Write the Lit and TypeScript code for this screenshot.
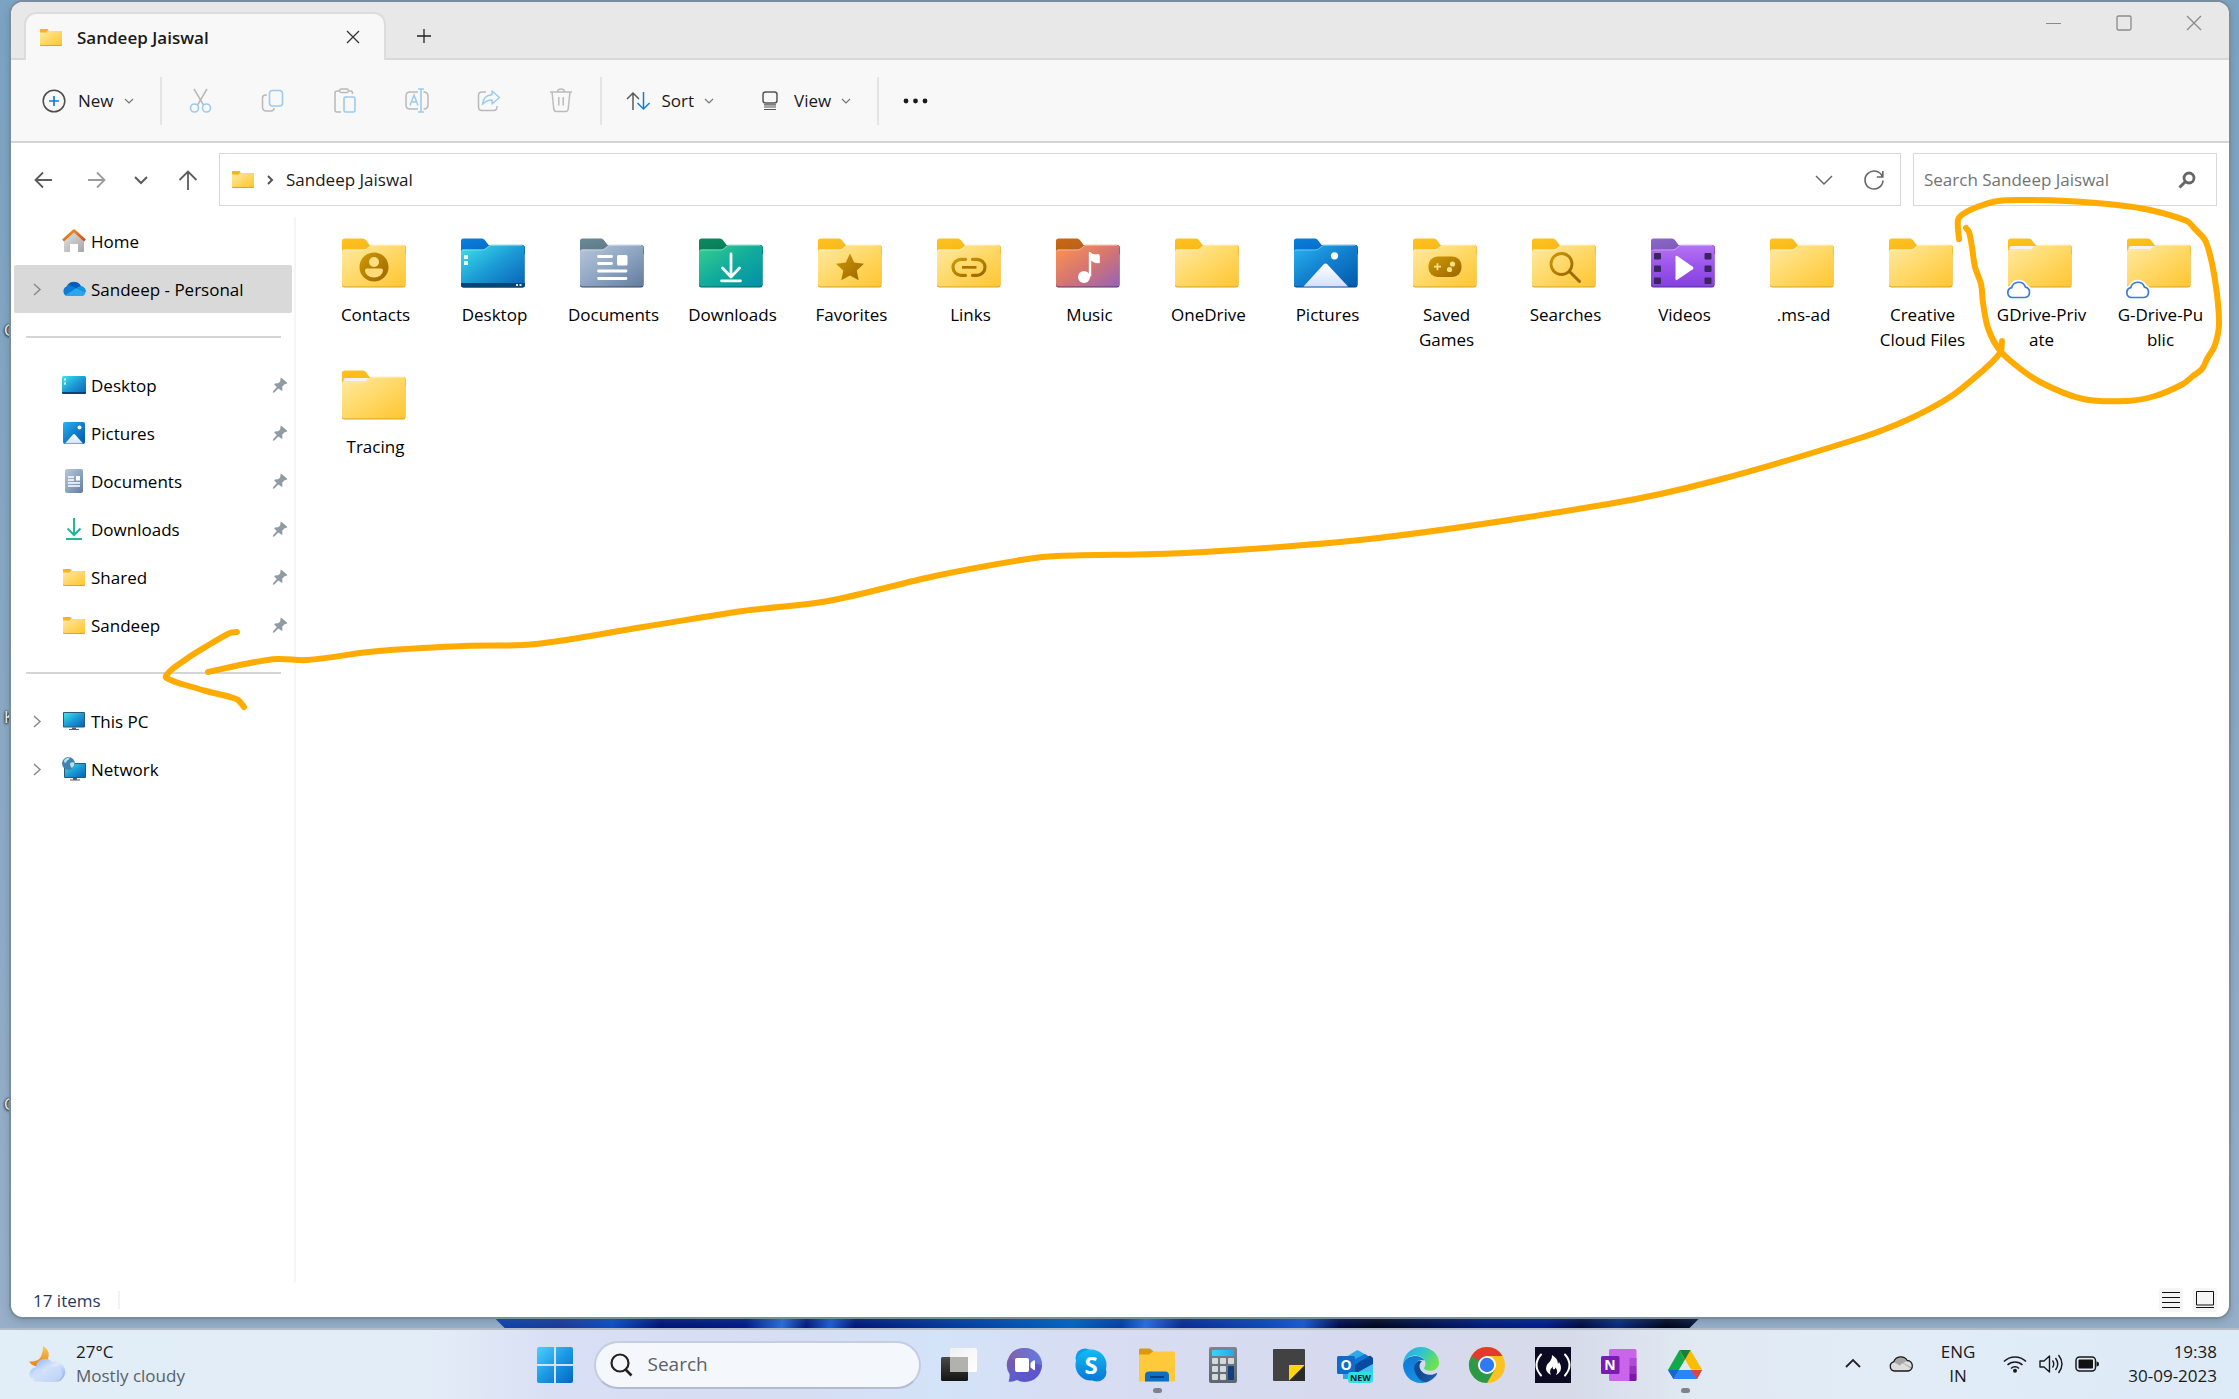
import { LitElement, html, svg, css } from "lit";
import { customElement } from "lit/decorators.js";
import { classMap } from "lit/directives/class-map.js";

type Point = [number, number];

interface FolderLook {
  tab: string;
  body: string;
  base: string;
}

interface FileEntry {
  lines: string[];
  look: FolderLook;
  emblem?: unknown;
  paper?: boolean;
  cloud?: boolean;
}

interface Place {
  label: string;
  icon: unknown;
  expandable?: boolean;
  pinned?: boolean;
  selected?: boolean;
}

/* ---------- gradients shared by every icon ---------- */

const gradient = (id: string, stops: string[], x2 = 1, y2 = 1) => svg`
  <linearGradient id=${id} x1="0" y1="0" x2=${x2} y2=${y2}>
    ${stops.map((c, i) => svg`<stop offset=${i / (stops.length - 1)} stop-color=${c} />`)}
  </linearGradient>`;

const gradients = html`
  <svg class="defs" width="0" height="0" aria-hidden="true">
    <defs>
      ${gradient("yellow", ["#ffe9a4", "#ffd866", "#ffc531"])}
      ${gradient("yellowTab", ["#ffc21d", "#f3b01c"])}
      ${gradient("gold", ["#cf9a08", "#9c6500"])}
      ${gradient("desk", ["#3fe3e8", "#1c9bd6", "#0862b8"])}
      ${gradient("blueTab", ["#0a7fdc", "#0561bd"])}
      ${gradient("docs", ["#b9c7d9", "#8ea6c4", "#647c9c"])}
      ${gradient("docsTab", ["#6a8a96", "#566e7c"])}
      ${gradient("down", ["#37d18e", "#12ab9c", "#0090a8"])}
      ${gradient("downTab", ["#0b8a5e", "#067355"])}
      ${gradient("music", ["#ff9350", "#d6766f", "#9562b8"])}
      ${gradient("musicTab", ["#cc6810", "#a85a25"])}
      ${gradient("pics", ["#28b5f2", "#127fcc", "#0358ac"])}
      ${gradient("video", ["#b673f3", "#9c55ec", "#8441dd"], 0, 1)}
      ${gradient("videoTab", ["#8b68c9", "#7450ab"])}
      ${gradient("snow", ["#ffffff", "#d4e0ff"], 0, 1)}
      ${gradient("wall", ["#e4e4e4", "#a6a6a6"])}
      ${gradient("roof", ["#f59a1b", "#d5460c"])}
      ${gradient("arrowDown", ["#34cf8d", "#0f9fa4"])}
      ${gradient("win", ["#4dd0ff", "#1b98e4", "#0068c8"])}
      ${gradient("moon", ["#f7c95c", "#f0820e"], 0, 1)}
      ${gradient("cloudy", ["#7fa9ee", "#dfeafc", "#7ea5ea"])}
      ${gradient("chat", ["#8a5a9c", "#5f5cc8", "#5a4fd0"])}
      ${gradient("chatSky", ["#7d66b5", "#6a86e8"], 1, 0)}
      ${gradient("skype", ["#10bdf5", "#0a78d4"], 0, 1)}
      ${gradient("calc", ["#7c858c", "#5c666e"], 0, 1)}
      ${gradient("calcTop", ["#35d7ff", "#24a9e6"], 1, 0)}
      ${gradient("edgeTop", ["#2aa9ec", "#2fc4cf", "#6be24e"], 1, 0.5)}
      ${gradient("edgeLow", ["#1377cc", "#1283dc", "#1490e6"], 0.3, 1)}
      ${gradient("edgeDark", ["#0c4f9e", "#114b94", "#1a5fae"], 1, 0.6)}
      ${gradient("outlook", ["#30b4f0", "#0a5fc0"])}
      ${gradient("dark", ["#4a4a48", "#141414"], 0, 1)}
      ${gradient("light", ["#f0f0f0", "#ffffff"])}
    </defs>
  </svg>`;

/* ---------- folders ---------- */

const looks: Record<string, FolderLook> = {
  yellow: { tab: "url(#yellowTab)", body: "url(#yellow)", base: "#dba128" },
  desktop: { tab: "url(#blueTab)", body: "url(#desk)", base: "#0b3f73" },
  documents: { tab: "url(#docsTab)", body: "url(#docs)", base: "#37475c" },
  downloads: { tab: "url(#downTab)", body: "url(#down)", base: "#04625f" },
  music: { tab: "url(#musicTab)", body: "url(#music)", base: "#5c3566" },
  pictures: { tab: "url(#blueTab)", body: "url(#pics)", base: "#03408a" },
  videos: { tab: "url(#videoTab)", body: "url(#video)", base: "#5b2ba6" },
};

const bodyPath =
  "M0 14q0-2.500 2.500-2.500h18c2 0 3.500-.4 4.800-1.600l2-1.800c.9-.8 2-1.100 3.200-1.100h30.500q2.500 0 2.500 2.500v37.500q0 2.500-2.500 2.500h-58.500q-2.500 0-2.500-2.500z";

const cloudBadge = svg`
  <path d="M4 59.500a5 5 0 0 1-.3-9.800a7.200 7.200 0 0 1 13.800-.6a5.300 5.300 0 0 1-.6 10.400z"
    fill="#fff" stroke="#fff" stroke-width="5" />
  <path d="M4 59.500a5 5 0 0 1-.3-9.800a7.200 7.200 0 0 1 13.800-.6a5.300 5.300 0 0 1-.6 10.400z"
    fill="#fff" stroke="#3a7be0" stroke-width="1.700" />`;

const folder = (f: FileEntry) => html`
  <svg class="folder" viewBox="0 0 64 50" aria-hidden="true">
    <path d="M0 3q0-2.500 2.500-2.500h17.500c2 0 3 .6 4.200 2l3.600 4.800h33.200q3 0 3 3v6h-64z" fill=${f.look.tab} />
    ${f.paper ? svg`<path d="M1.500 10q0-2 2-2h24l-4 4h-22z" fill="#f3f3f3" />` : ""}
    <path d=${bodyPath} fill=${f.look.base} />
    <path d=${bodyPath} fill=${f.look.body} transform="scale(1 .982)" />
    <path d="M.5 13.500q.3-1.500 2-1.500h18c2 0 3.500-.4 4.800-1.600l2-1.800c.9-.8 2-1.100 3.200-1.100h30.500"
      fill="none" stroke="#fff" stroke-opacity=".35" />
    ${f.emblem ?? ""}
    ${f.cloud ? cloudBadge : ""}
  </svg>`;

const emblems = {
  contact: svg`
    <circle cx="32" cy="29" r="14.500" fill="url(#gold)" />
    <circle cx="32" cy="24" r="5" fill="#ffdf80" />
    <path d="M23 32.500q0-2 2-2h14q2 0 2 2a9 7 0 0 1-18 0z" fill="#ffdc75" />`,
  desktop: svg`
    <path d="M3 17h4v4h-4zM3 23h4v4h-4z" fill="#e9fbff" />
    <path d="M0 45h64v2q0 2.500-2.500 2.500h-59q-2.500 0-2.500-2.500z" fill="#0a4274" />
    <path d="M55 46h2v2h-2zM58.500 46h2v2h-2z" fill="#d8e6f2" />`,
  document: svg`
    <path d="M18.500 18.500h13M18.500 25.500h13M18.500 33h27.500M18.500 40.500h27.500" stroke="#fff" stroke-width="2.800" stroke-linecap="round" />
    <rect x="37" y="17" width="10.500" height="10.500" rx="1.500" fill="#fff" />`,
  download: svg`
    <path d="M32 16v23M23.500 30l8.500 9l8.500-9M22.500 42.800h19" fill="none" stroke="#f4fffb" stroke-width="2.800" stroke-linecap="round" stroke-linejoin="round" />`,
  star: svg`
    <path d="M32 15.500l4.200 9l9.800 1.200l-7.200 6.800l1.900 9.700l-8.700-4.800l-8.700 4.800l1.900-9.700l-7.200-6.800l9.800-1.200z" fill="url(#gold)" />`,
  link: svg`
    <path d="M28.500 21.300h-4.500a8 8 0 0 0 0 16h4.500M35.500 21.300h4.500a8 8 0 0 1 0 16h-4.500" fill="none" stroke="url(#gold)" stroke-width="3.200" stroke-linecap="round" />
    <path d="M25 28h14.500v2.700h-14.500z" fill="#a87300" />`,
  note: svg`
    <path d="M34 14.500v24" stroke="#fff" stroke-width="2.400" />
    <path d="M32.800 13.500q4 3.500 9 2.500q2 0 2 2v7q-6 .8-9.800-3.500z" fill="#fff" />
    <ellipse cx="28" cy="39" rx="6" ry="6" fill="#fff" />`,
  picture: svg`
    <path d="M9.500 48.500l20-22q2-1.800 4 0l20.500 22z" fill="url(#snow)" />
    <circle cx="40.500" cy="17.800" r="3.600" fill="#fff" />`,
  game: svg`
    <rect x="15.500" y="18.500" width="33" height="20.500" rx="9" fill="url(#gold)" />
    <path d="M21 28.700h7M24.500 25.200v7" stroke="#ffdf80" stroke-width="1.800" />
    <circle cx="39.500" cy="26" r="2.600" fill="#ffdf80" />
    <circle cx="36.500" cy="31.500" r="2.600" fill="#ffdf80" />`,
  search: svg`
    <circle cx="29.500" cy="26" r="10.500" fill="none" stroke="url(#gold)" stroke-width="2.800" />
    <path d="M37.500 33.500l10 10" stroke="#9c6a00" stroke-width="3" stroke-linecap="round" />`,
  film: svg`
    <g fill="#3b2560">
      ${[15, 27.500, 39.500].map((y) => svg`
        <rect x="3" y=${y} width="7" height="6.500" rx="1" />
        <rect x="53.500" y=${y} width="7" height="6.500" rx="1" />`)}
    </g>
    <path d="M24.500 19q0-2 1.800-1l15.500 10.800q1.500 1.200 0 2.400l-15.500 10.600q-1.800 1-1.800-1z" fill="#fff" />`,
};

const files: FileEntry[] = [
  { lines: ["Contacts"], look: looks.yellow, emblem: emblems.contact },
  { lines: ["Desktop"], look: looks.desktop, emblem: emblems.desktop },
  { lines: ["Documents"], look: looks.documents, emblem: emblems.document },
  { lines: ["Downloads"], look: looks.downloads, emblem: emblems.download },
  { lines: ["Favorites"], look: looks.yellow, emblem: emblems.star },
  { lines: ["Links"], look: looks.yellow, emblem: emblems.link },
  { lines: ["Music"], look: looks.music, emblem: emblems.note },
  { lines: ["OneDrive"], look: looks.yellow },
  { lines: ["Pictures"], look: looks.pictures, emblem: emblems.picture },
  { lines: ["Saved", "Games"], look: looks.yellow, emblem: emblems.game },
  { lines: ["Searches"], look: looks.yellow, emblem: emblems.search },
  { lines: ["Videos"], look: looks.videos, emblem: emblems.film },
  { lines: [".ms-ad"], look: looks.yellow },
  { lines: ["Creative", "Cloud Files"], look: looks.yellow },
  { lines: ["GDrive-Priv", "ate"], look: looks.yellow, paper: true, cloud: true },
  { lines: ["G-Drive-Pu", "blic"], look: looks.yellow, paper: true, cloud: true },
  { lines: ["Tracing"], look: looks.yellow, paper: true },
];

/* ---------- small icons ---------- */

const icon = (w: number, h: number, content: unknown) => html`
  <svg width=${w} height=${h} viewBox="0 0 ${w} ${h}" fill="none" aria-hidden="true">${content}</svg>`;

const chevron = (dir: "down" | "right" | "up", w: number, h: number, color: string, stroke: number) => {
  const d =
    dir === "down" ? `M1 1l${w / 2 - 1} ${h - 2}l${w / 2 - 1} -${h - 2}`
    : dir === "up" ? `M1 ${h - 1}l${w / 2 - 1} -${h - 2}l${w / 2 - 1} ${h - 2}`
    : `M1 1l${w - 2} ${h / 2 - 1}l-${w - 2} ${h / 2 - 1}`;
  return icon(w, h, svg`<path d=${d} stroke=${color} stroke-width=${stroke} />`);
};

const smallFolder = (w: number, h: number) =>
  icon(w, h, svg`
    <path d="M0 1q0-1 1-1h6l2 2v3h-9z" fill="#f8b515" />
    <rect x="0" y="2" width=${w} height=${h - 2} rx="1" fill="#e0a42a" />
    <rect x="0" y="2" width=${w} height=${h - 3} rx="1" fill="url(#yellow)" />
    <path d="M0 1q0-1 1-1h6q1 0 1 1l-1 2q0 .5-1 .5h-6z" fill="#f8b515" />`);

const placeIcons = {
  home: icon(24, 24, svg`
    <path d="M2 11l10-9l10 9v11q0 1-1 1h-5v-8h-8v8h-5q-1 0-1-1z" fill="url(#wall)" />
    <path d="M1 11.500l11-10l11 10" stroke="url(#roof)" stroke-width="2.600" stroke-linejoin="round" />`),
  oneDrive: icon(24, 16, svg`
    <path d="M5 15a5 5 0 0 1-.5-9.400a8 8 0 0 1 14.500-.3a5 5 0 0 1 .5 9.700z" fill="#0f7bd4" />
    <path d="M6.500 3.500a8 8 0 0 1 12.500 1.800l-3.500 2.700z" fill="#0a5cb8" />
    <path d="M19 5.300a5 5 0 0 1 4.800 6l-9-4.500q2-1.800 4.200-1.500z" fill="#1494e4" />
    <path d="M3 14.500l11.500-7.500l9 4.500a4.300 4.300 0 0 1-4 3.500h-14.500z" fill="#28a8ea" />`),
  desktop: icon(24, 18, svg`
    <rect width="24" height="18" rx="1.500" fill="url(#desk)" />
    <path d="M0 16h24v.5q0 1.500-1.500 1.500h-21q-1.500 0-1.500-1.500z" fill="#0a4376" />
    <path d="M2 2.500h2v2h-2zM2 6.500h2v2h-2z" fill="#fff" />`),
  pictures: icon(22, 22, svg`
    <rect width="22" height="22" rx="2" fill="url(#pics)" />
    <path d="M2 21.500l8-9q1-1 2 0l8 9z" fill="url(#snow)" />
    <circle cx="16.500" cy="5.500" r="2" fill="#fff" />`),
  documents: icon(18, 24, svg`
    <rect width="18" height="24" rx="2" fill="url(#docs)" />
    <path d="M3 8h6M3 11h6M3 14h12M3 17h12" stroke="#fff" stroke-width="1.400" />
    <rect x="11" y="7" width="4" height="4.500" fill="#fff" />`),
  downloads: icon(18, 24, svg`
    <path d="M9 1v17M2.500 11.500l6.500 6.500l6.500-6.500M1 22h16" stroke="url(#arrowDown)" stroke-width="2" />
    <path d="M9 1v17" stroke="#20b896" stroke-width="2" /><path d="M1 22h16" stroke="#20b896" stroke-width="2" />`),
  folder: smallFolder(22, 17),
  pc: icon(22, 18, svg`
    <rect width="22" height="15.500" rx="1" fill="#2b5873" />
    <rect x="1" y="1" width="20" height="13.500" fill="url(#desk)" />
    <path d="M9 15.500h4v1.500h3v1h-10v-1h3z" fill="#54626c" />`),
  network: icon(24, 24, svg`
    <rect x="2" y="6" width="22" height="15" rx="1" fill="#2b5873" />
    <rect x="3" y="7" width="20" height="13" fill="url(#desk)" />
    <path d="M11 21h4v1.500h3v1h-10v-1h3z" fill="#54626c" />
    <circle cx="6.500" cy="6.500" r="6.500" fill="#3f83b2" />
    <path d="M2 3q3-3 6-2.500q-1 2.500-3 3q0 2-2.500 2.500zM8 6q3-1.500 4.500 0q0 3-2.500 5q-2-1-2-5z" fill="#b9e0ee" />`),
};

const pin = icon(16, 16, svg`
  <path d="M9.500 1l5.500 4.500q.8 1-.5 1.300l-2 .4l-2.300 2.600l.2 3.400q-.2 1-1.200.4l-2.700-2.200l-4.300 4l-1.500.3l.4-1.500l3.700-4.200l-2.300-2.200q-.7-1 .4-1.300l3.500-.2l2-2.400l0-2q.2-1.500 1.100-.9z" fill="#8f9aa3" />`);

const places: (Place | "rule")[] = [
  { label: "Home", icon: placeIcons.home },
  { label: "Sandeep - Personal", icon: placeIcons.oneDrive, expandable: true, selected: true },
  "rule",
  { label: "Desktop", icon: placeIcons.desktop, pinned: true },
  { label: "Pictures", icon: placeIcons.pictures, pinned: true },
  { label: "Documents", icon: placeIcons.documents, pinned: true },
  { label: "Downloads", icon: placeIcons.downloads, pinned: true },
  { label: "Shared", icon: placeIcons.folder, pinned: true },
  { label: "Sandeep", icon: placeIcons.folder, pinned: true },
  "rule",
  { label: "This PC", icon: placeIcons.pc, expandable: true },
  { label: "Network", icon: placeIcons.network, expandable: true },
];

const editActions = [
  { name: "Cut", art: svg`
    <g stroke="#b9b9b9" stroke-width="1.500"><path d="M5 1l9.500 16M18 1l-9.500 16" /></g>
    <g stroke="#9ccbf0" stroke-width="1.600"><circle cx="5.500" cy="20" r="4" /><circle cx="17.500" cy="20" r="4" /></g>` },
  { name: "Copy", art: svg`
    <path d="M6 7h-1.500q-3 0-3 3v9q0 4 4 4h4.500q3 0 3-3" stroke="#b9b9b9" stroke-width="1.500" />
    <rect x="8.500" y="2.500" width="13" height="15.500" rx="3" stroke="#9ccbf0" stroke-width="1.600" />` },
  { name: "Paste", art: svg`
    <path d="M8 24h-4q-2 0-2-2v-17q0-2 2-2h2M16 3h2q1.500 0 1.500 3" stroke="#b9b9b9" stroke-width="1.500" />
    <rect x="6.500" y="1" width="9" height="3.500" rx="1.700" stroke="#b9b9b9" stroke-width="1.400" />
    <rect x="11" y="9" width="11" height="15" rx="1.500" stroke="#9ccbf0" stroke-width="1.600" />` },
  { name: "Rename", art: svg`
    <path d="M13 4h-8q-4 0-4 4v9q0 4 4 4h8M18.500 4q4.500 0 4.500 4v9q0 4-4.500 4" stroke="#b9b9b9" stroke-width="1.500" />
    <path d="M5 17.500l4-10.500l4 10.500M6.300 14h5.400" stroke="#9ccbf0" stroke-width="1.500" />
    <path d="M13 1h6M16 1v23M13 24h6" stroke="#9ccbf0" stroke-width="1.600" />` },
  { name: "Share", art: svg`
    <path d="M9 4h-4q-3.500 0-3.500 3.500v11.500q0 3.500 3.500 3.500h11.500q3.500 0 3.500-3.500v-1" stroke="#b9b9b9" stroke-width="1.500" />
    <path d="M15 3l7.500 6.500l-7.500 6.500v-4q-6 0-9.500 4.500q1-9.500 9.500-9.700z" stroke="#9ccbf0" stroke-width="1.500" stroke-linejoin="round" />` },
  { name: "Delete", art: svg`
    <path d="M1 4h22M8.500 4q0-3 3.500-3t3.500 3M3 4l1.800 17q.3 2.500 2.500 2.500h9.400q2.200 0 2.500-2.500l1.800-17M9.800 9v8.500M14.200 9v8.500" stroke="#bbb" stroke-width="1.500" />` },
];

/* ---------- taskbar apps ---------- */

const apps: { name: string; art: unknown; running?: boolean }[] = [
  { name: "Task view", art: svg`
    <rect x="0" y="10" width="27" height="24" rx="1.500" fill="url(#dark)" />
    <rect x="9" y="1" width="27" height="24" rx="1.500" fill="url(#light)" />
    <path d="M9 10h18v15h-16.500q-1.500 0-1.500-1.500z" fill="#b1b1ae" />` },
  { name: "Chat", art: svg`
    <path d="M18 1a17 17 0 1 1-8 32q-5 2.500-8.500 1.500q1.500-4 1-7.500a17 17 0 0 1 15.500-26z" fill="url(#chat)" />
    <path d="M18 1a17 17 0 0 1 17 17l-17-4l-16-2a17 17 0 0 1 16-11z" fill="url(#chatSky)" opacity=".7" />
    <rect x="8" y="11" width="14" height="14" rx="2" fill="#fff" />
    <path d="M23.500 16l3-2.500q1.500-1 1.500.7v8q0 1.700-1.500.6l-3-2.400z" fill="#fff" />` },
  { name: "Skype", art: svg`
    <circle cx="12" cy="11" r="9.500" fill="#0a9fe8" />
    <circle cx="24" cy="25" r="9.500" fill="#0a82da" />
    <circle cx="18" cy="18" r="15.500" fill="url(#skype)" />
    <text x="18" y="27" class="skype-s" text-anchor="middle">S</text>` },
  { name: "File Explorer", running: true, art: svg`
    <path d="M0 3q0-1.500 1.500-1.500h9.500l3.500 3v5h-14.500z" fill="#d99a0b" />
    <path d="M0 7.500h10l4-3h20.500q1.500 0 1.500 1.500v27q0 1.500-1.500 1.500h-33q-1.500 0-1.500-1.500z" fill="#ffc93c" />
    <path d="M6 34.500v-6q0-4 4-4h16q4 0 4 4v6z" fill="#0f6fc6" />
    <path d="M11 30h14" stroke="#0a3f80" stroke-width="2" />` },
  { name: "Calculator", art: svg`
    <rect x="4" y="0" width="28" height="36" rx="2" fill="url(#calc)" />
    <rect x="7" y="3" width="22" height="6" rx="1" fill="url(#calcTop)" />
    <g fill="#d5d9dc">
      ${[11, 19, 27].map((y) => svg`
        <rect x="7" y=${y} width="6" height="6" rx="1" /><rect x="15" y=${y} width="6" height="6" rx="1" />`)}
      <rect x="23" y="11" width="6" height="6" rx="1" />
    </g>
    <rect x="23" y="19" width="6" height="14" rx="1" fill="#123f7c" />` },
  { name: "Sticky Notes", art: svg`
    <rect x="2" y="2" width="32" height="32" rx="1" fill="#424242" />
    <path d="M18 34v-16h16z" fill="#ffd60a" /><path d="M18 34l16-16v16z" fill="#2b2b2b" />` },
  { name: "Outlook (new)", art: svg`
    <path d="M6 12l13-8.300q1.500-.9 3 0l14 8.300v20h-30z" fill="#2fa9e8" />
    <path d="M14 14l14-7l8 5.500l-17 13z" fill="#0a78d4" />
    <path d="M18 17.500l15-9l3 2.500v6l-18 10z" fill="#0b4aa2" />
    <path d="M18 27l18-10v12h-18z" fill="#3cc6f4" />
    <rect x="0" y="9" width="18" height="18" rx="1.500" fill="#0f6cc8" />
    <text x="9" y="23" class="letter" text-anchor="middle">O</text>
    <rect x="11" y="25" width="25" height="11" rx="3" fill="#2fe0e0" />
    <text x="23.500" y="34" class="badge" text-anchor="middle">NEW</text>` },
  { name: "Edge", art: svg`
    <path d="M0 17.500c1.500-5 6-8.500 12-8.500c4.500 0 8 1.500 9.500 4.500q-1-.5-3-.5c-4 0-6.500 3.500-6.500 7.500c0 7 5 12.800 10 15q-2 .5-4 .5c-10 0-18-8-18-18.500z" fill="url(#edgeLow)" />
    <path d="M0 17.500c.5-10 8.500-17.500 18-17.500s18 7 18 15.500c0 5-4 8.300-8.500 8.300c-4 0-6.500-1.500-6.500-2.600c0-.9 1.500-1.700 1.500-4.700c0-4-4-8-10.500-8c-6 0-10.500 4-12 9z" fill="url(#edgeTop)" />
    <path d="M16.500 13.500c-4.500 1.500-6.500 6.500-4.500 12c2 5 6 8.800 10.500 10c5-1.300 9.500-4.500 11.500-8.500c.3-.8-.3-1.200-1-.8c-2 1-4 1.500-6.500 1.500c-5.500 0-10-4-10-8.700c0-2 .8-3.500 2.500-4.500z" fill="url(#edgeDark)" />` },
  { name: "Chrome", art: svg`
    <circle cx="18" cy="18" r="18" fill="#fcc31e" />
    <path d="M2.400 9a18 18 0 0 0 15.600 27l7.800-13.500l-15.600 0z" fill="#2a9a47" />
    <path d="M2.400 9a18 18 0 0 1 31.200 0h-15.600l-8 13.500z" fill="#e23b2e" />
    <path d="M2.400 9l7.800 13.500l7.800-4.500z" fill="#2a9a47" />
    <circle cx="18" cy="18" r="9" fill="#fff" /><circle cx="18" cy="18" r="7.200" fill="#2f79f2" />` },
  { name: "freeCodeCamp", art: svg`
    <rect width="36" height="36" fill="#0a0a23" />
    <path d="M6 7.500q-9 10.500 0 21M30 7.500q9 10.500 0 21" stroke="#fff" stroke-width="2" stroke-linecap="round" />
    <path d="M17 8q6 3.500 6 9q1-1 .8-2.500q4.500 7 0 11.500q-1.500 1.500-3 2q3-4-.5-7.500q0 2-1.700 2q-1.500-1-.6-3q-4.500 4-2 8.500q-6.500-3-4.500-9q1-2.500 3.500-4.500q2.500-3 2-6.500z" fill="#fff" />` },
  { name: "OneNote", art: svg`
    <rect x="8" y="2" width="27.500" height="32" rx="1.500" fill="#ca64ea" />
    <path d="M28.500 11h7v8h-7z" fill="#ae4bd5" /><path d="M28.500 19h7v7.500h-7z" fill="#9332bf" />
    <path d="M28.500 26.500h7v6q0 1.500-1.500 1.500h-5.500z" fill="#7719aa" />
    <rect x="0" y="9" width="18.500" height="18" rx="1.500" fill="#7a1cae" />
    <text x="9" y="23" class="letter" text-anchor="middle">N</text>` },
  { name: "Google Drive", running: true, art: svg`
    <path d="M12.500 3l5.500 9.500l-11.500 19.500l-5.500-9z" fill="#11a94c" />
    <path d="M12.500 3h11l11.500 19.500h-11z" fill="#fbbc04" />
    <path d="M12.500 3h11l-5.500 9.500z" fill="#188038" />
    <path d="M12 23h23l-5 9h-23.500z" fill="#2a84fc" />
    <path d="M1 23h11l-5.500 9z" fill="#1967d2" />
    <path d="M24 23h11l-5 9z" fill="#ea4335" />` },
];

/* ---------- freehand ink ---------- */

const loop: Point[] = [
  [1959, 239], [1958, 220], [1963, 214], [1977, 207], [1998, 201], [2027, 200], [2067, 201], [2117, 205],
  [2150, 210], [2187, 221], [2194, 228], [2206, 242], [2215, 280], [2219, 323], [2215, 345], [2207, 359],
  [2202, 369], [2193, 376], [2183, 384], [2155, 396], [2127, 401], [2083, 399], [2040, 382], [2013, 363],
  [1998, 348], [1988, 328], [1983, 303], [1981, 284], [1975, 267], [1972, 247], [1969, 232], [1966, 228],
];
const shaft: Point[] = [
  [2002, 341], [2000, 353], [1980, 373], [1950, 397], [1907, 420], [1857, 439], [1714, 481], [1614, 503],
  [1378, 538], [1185, 553], [1057, 556], [1021, 560], [935, 576], [828, 601], [743, 611], [643, 627],
  [536, 644], [464, 646], [378, 651], [307, 660], [277, 659], [250, 663], [208, 672],
];
const head: Point[] = [
  [237, 632], [230, 633], [207, 646], [185, 660], [166, 676], [173, 681], [182, 684], [206, 691],
  [230, 697], [238, 700], [244, 707],
];

/** Turns a list of pen samples into a smooth cubic path. */
const ink = (pts: Point[]) => {
  let d = `M${pts[0][0]} ${pts[0][1]}`;
  for (let i = 0; i < pts.length - 1; i++) {
    const a = pts[Math.max(i - 1, 0)];
    const b = pts[i];
    const c = pts[i + 1];
    const e = pts[Math.min(i + 2, pts.length - 1)];
    const span = Math.hypot(c[0] - b[0], c[1] - b[1]);
    const tangent = (p: Point, q: Point) => {
      const len = Math.hypot(q[0] - p[0], q[1] - p[1]) || 1;
      return [((q[0] - p[0]) / len) * span / 3, ((q[1] - p[1]) / len) * span / 3];
    };
    const t1 = tangent(a, c);
    const t2 = tangent(b, e);
    d += `C${b[0] + t1[0]} ${b[1] + t1[1]} ${c[0] - t2[0]} ${c[1] - t2[1]} ${c[0]} ${c[1]}`;
  }
  return d;
};

@customElement("app-root")
export class AppRoot extends LitElement {
  static styles = css`
    :host {
      display: grid;
      grid-template-rows: 1fr auto;
      position: relative;
      min-height: 100vh;
      overflow: hidden;
      font: 17px/25px "Open Sans", "Noto Sans", sans-serif;
      color: #1a1a1a;
      background: linear-gradient(#7ba3c2, #8aa8c3 50%, #97afc9 90%);
    }
    * { box-sizing: border-box; }
    svg { display: block; flex: none; overflow: visible; }
    .defs { position: absolute; }
    button, input { font: inherit; color: inherit; border: 0; background: none; padding: 0; margin: 0; outline: 0; }
    button { display: flex; align-items: center; justify-content: center; }
    a { color: inherit; text-decoration: none; }

    .desktop { position: relative; display: flex; padding: 2px 10px 11px 11px; }
    .shortcut { position: absolute; left: 4px; font-size: 16px; color: #fff; text-shadow: 0 0 2px #000, 0 1px 3px #000; }
    .shortcut.one { top: 318px; }
    .shortcut.two { top: 705px; }
    .shortcut.three { top: 1092px; }
    .bloom {
      position: absolute; left: 22%; right: 24%; bottom: 0; height: 12px;
      clip-path: polygon(0 0, 100% 0, 99% 100%, 1% 100%);
      background: linear-gradient(100deg, #0a44b5, #1d3a9c 6%, #0a50c8 10%, #00137a 14%, #001a8c 21%, #2a6fe0 24%, #021a80 26%, #1a5fd8 28%,
        #001680 30%, #0052b8 43%, #0066c8 48%, #0040a8 52%, #2a6fe8 54%, #0a2a98 57%, #0a4bc0 64%, #1a5ad8 67%, #000c50 70%, #00071f 73%,
        #001a80 82%, #001a90 87%, #000c40 90%, #0a2a80 93%, #00061c 97%, #0a1440);
    }

    .window {
      position: relative; flex: 1; display: flex; flex-direction: column; min-width: 0;
      border-radius: 12px; overflow: hidden; background: #fff;
    }
    .halo { flex: 1; display: flex; min-width: 0; position: relative; border-radius: 12px; box-shadow: 0 0 0 2px #7a8d9d, 0 3px 8px 1px #4d626f60; }

    .titlebar { display: flex; height: 58px; background: #e8e8e8; box-shadow: inset 0 -2px #d9d9d9; }
    .tab {
      display: flex; align-items: center; width: 362px; margin: 10px 0 0 13px; padding: 0 24px 0 14px;
      background: #f8f8f8; border: 2px solid #dcdcdc; border-bottom: 0; border-radius: 12px 12px 0 0;
    }
    .tab .name { flex: 1; margin-left: 15px; font-weight: 600; }
    .add { width: 75px; height: 68px; }
    .caption { display: flex; margin-left: auto; }
    .caption button { width: 70px; height: 41px; }

    .toolbar { display: flex; align-items: center; height: 83px; background: #f8f8f8; border-bottom: 2px solid #d4d4d4; padding-left: 31px; }
    .menu { height: 48px; }
    .menu .text { margin: 0 10px 0 12px; }
    .menu.wide .text { margin-left: 16px; }
    .sep { width: 2px; height: 48px; margin: 0 24px 0 26px; background: #e4e4e4; }
    .edit { display: flex; margin: 0 -23px 0 -21px; }
    .edit button { width: 72px; height: 48px; }
    .menu.wide { margin-left: 48px; }

    .navbar { display: flex; padding: 10px 12px 11px 5px; height: 74px; }
    .navbar > button { width: 54px; }
    .navbar > button.narrow { width: 34px; }
    .navbar > button.up { width: 60px; margin-right: 1px; }
    .address { flex: 1; display: flex; align-items: center; border: 1px solid #d9d9d9; padding: 0 1px 0 12px; }
    .crumb { display: flex; align-items: center; flex: 1; gap: 13px; }
    .address button { width: 50px; height: 50px; }
    .find { display: flex; align-items: center; width: 304px; margin-left: 12px; border: 1px solid #d9d9d9; padding: 0 20px 0 10px; }
    .find input { flex: 1; min-width: 0; }
    .find input::placeholder { color: #737373; opacity: 1; }

    .body { flex: 1; display: flex; }
    .side { width: 285px; border-right: 2px solid #f5f5f5; padding: 0 2px 0 3px; }
    .place { display: flex; align-items: center; width: 100%; height: 48px; padding: 0 4px 0 0; border-radius: 2px; color: #000; }
    .place.selected { background: #d9d9d9; }
    .place .twist { width: 48px; padding-right: 2px; display: flex; justify-content: center; }
    .place .glyph { width: 24px; display: flex; justify-content: center; margin-right: 5px; }
    .place .label { flex: 1; text-align: left; }
    .rule { height: 48px; display: flex; align-items: center; }
    .rule::before { content: ""; flex: 1; height: 2px; margin: 0 11px 0 12px; background: #d5d5d5; }

    .files { flex: 1; display: grid; grid-template-columns: repeat(auto-fill, 119px); grid-auto-rows: 132px; align-content: start; padding: 11px 0 0 20px; margin-right: -10px; }
    .file { flex-direction: column; justify-content: flex-start; padding-top: 10px; color: #000; }
    .folder { width: 64px; height: 50px; margin: 0 3px 14px 0; }

    .status { display: flex; align-items: center; height: 35px; padding: 0 12px 0 22px; color: #1f3a5c; }
    .status .count { padding: 1px 17px 0 0; }
    .status .tick { width: 2px; height: 18px; background: #f2f2f2; margin-right: auto; }
    .status button { width: 24px; height: 24px; background: #f5f5f5; border-radius: 3px; margin-left: 10px; }

    .taskbar {
      display: grid; grid-template-columns: 1fr auto 1fr; align-items: center; height: 71px; border-top: 2px solid #b4bcc8;
      background: linear-gradient(90deg, #e1edf7, #e3edf7 19%, #d9dff4 25%, #d6def4 36%, #d3e3f8 42%, #d7ddf3 48%, #d7daef 60%, #d6dae9 70%, #e1eaf3 76%, #e1ecf7 85%, #ddeaf7);
    }
    .weather { display: flex; justify-self: start; gap: 11px; padding: 0 0 2px 29px; text-align: left; }
    .stack { display: block; font-size: 17px; line-height: 24px; }
    .muted { color: #5a5f66; }
    .dock { display: flex; align-items: center; }
    .app { position: relative; width: 66px; height: 68px; }
    .app.running::after { content: ""; position: absolute; bottom: 6px; left: 29px; width: 9px; height: 5px; border-radius: 3px; background: #7d828c; }
    .pill {
      display: flex; align-items: center; gap: 16px; width: 327px; height: 48px; margin: 0 5px 0 6px; padding: 0 14px;
      border: 2px solid #c5cde2; border-bottom-color: #b3bbd3; border-radius: 24px; background: #f4f7fc;
    }
    .pill input { flex: 1; min-width: 0; font-size: 19px; }
    .pill input::placeholder { color: #5c5f66; opacity: 1; }
    .tray { display: flex; justify-self: end; align-items: center; padding: 0 22px 2px 0; }
    .tray button { width: 36px; height: 48px; }
    .tray .roomy { width: 48px; }
    .tray .lang { width: 66px; margin-right: 6px; }
    .tray .clock { width: 112px; justify-content: flex-end; text-align: right; }

    .ink { position: absolute; left: 0; top: 0; pointer-events: none; }
    .skype-s { font: 700 24px "Open Sans", sans-serif; fill: #fff; }
    .letter { font: 700 14px "Open Sans", sans-serif; fill: #fff; }
    .badge { font: 700 9px "Open Sans", sans-serif; fill: #06242c; }
  `;

  private titlebar() {
    return html`
      <header class="titlebar">
        <div class="tab">
          ${smallFolder(22, 17)}
          <span class="name">Sandeep Jaiswal</span>
          <button aria-label="Close tab">${icon(14, 14, svg`<path d="M1 1l12 12M13 1l-12 12" stroke="#333" stroke-width="1.300" />`)}</button>
        </div>
        <button class="add" aria-label="New tab">${icon(16, 16, svg`<path d="M8 1v14M1 8h14" stroke="#222" stroke-width="1.300" />`)}</button>
        <div class="caption">
          <button aria-label="Minimize">${icon(16, 16, svg`<path d="M0 8.500h15" stroke="#8a8a8a" />`)}</button>
          <button aria-label="Maximize">${icon(16, 16, svg`<rect x="1" y="1" width="14" height="14" rx="1.500" stroke="#8a8a8a" stroke-width="1.300" />`)}</button>
          <button aria-label="Close">${icon(16, 16, svg`<path d="M1 1l14 14M15 1l-14 14" stroke="#8a8a8a" stroke-width="1.300" />`)}</button>
        </div>
      </header>`;
  }

  private toolbar() {
    const more = chevron("down", 10, 6, "#777", 1.2);
    return html`
      <div class="toolbar" role="toolbar" aria-label="Commands">
        <button class="menu">
          ${icon(24, 24, svg`<circle cx="12" cy="12" r="10.800" stroke="#4d4d4d" stroke-width="1.500" /><path d="M12 7v10M7 12h10" stroke="#0f7fd6" stroke-width="1.700" />`)}
          <span class="text">New</span>${more}
        </button>
        <span class="sep"></span>
        <div class="edit">
          ${editActions.map((a) => html`<button aria-label=${a.name}>${icon(24, 25, a.art)}</button>`)}
        </div>
        <span class="sep"></span>
        <button class="menu">
          ${icon(24, 20, svg`<path d="M7 19v-17M1 8l6-6l6 6" stroke="#5a5a5a" stroke-width="1.500" /><path d="M17.500 1v17M11.500 12l6 6l6-6" stroke="#0f7fd6" stroke-width="1.500" />`)}
          <span class="text">Sort</span>${more}
        </button>
        <button class="menu wide">
          ${icon(16, 20, svg`<rect x="1" y="1" width="14" height="11" rx="2.500" stroke="#555" stroke-width="1.500" /><path d="M2 13.800h12M2 16h12M2 18.500h12" stroke="#555" stroke-width="1.200" />`)}
          <span class="text">View</span>${more}
        </button>
        <span class="sep"></span>
        <button class="menu" aria-label="See more">${icon(25, 6, svg`<g fill="#1a1a1a"><circle cx="3" cy="3" r="2.400" /><circle cx="12.500" cy="3" r="2.400" /><circle cx="22" cy="3" r="2.400" /></g>`)}</button>
      </div>`;
  }

  private navbar() {
    return html`
      <nav class="navbar" aria-label="Address">
        <button aria-label="Back">${icon(18, 18, svg`<path d="M18 9h-16M9 1.500l-7.500 7.500l7.500 7.500" stroke="#5c5c5c" stroke-width="1.800" />`)}</button>
        <button aria-label="Forward">${icon(18, 18, svg`<path d="M0 9h16M9 1.500l7.500 7.500l-7.500 7.500" stroke="#9c9c9c" stroke-width="1.800" />`)}</button>
        <button class="narrow" aria-label="Recent locations">${chevron("down", 14, 8, "#5c5c5c", 2)}</button>
        <button class="up" aria-label="Up">${icon(20, 20, svg`<path d="M10 20v-18M1.500 10l8.500-8.500l8.500 8.500" stroke="#5c5c5c" stroke-width="1.800" />`)}</button>
        <div class="address">
          <div class="crumb">${smallFolder(22, 17)}${chevron("right", 6, 10, "#555", 2)}<a href="#jaiswal">Sandeep Jaiswal</a></div>
          <button aria-label="Previous locations">${chevron("down", 18, 10, "#666", 1.5)}</button>
          <button aria-label="Refresh">${icon(20, 20, svg`<path d="M18.500 7a9 9 0 1 0 .5 3.500M18.800 1v6h-6" stroke="#666" stroke-width="1.600" />`)}</button>
        </div>
        <div class="find">
          <input type="search" aria-label="Search folder" placeholder="Search Sandeep Jaiswal" />
          ${icon(18, 18, svg`<circle cx="11" cy="7" r="5" stroke="#666" stroke-width="2.800" /><path d="M7.500 10.500l-6 6" stroke="#666" stroke-width="3" />`)}
        </div>
      </nav>`;
  }

  private place(p: Place | "rule") {
    if (p === "rule") return html`<div class="rule"></div>`;
    return html`
      <button class=${classMap({ place: true, selected: !!p.selected })}>
        <span class="twist">${p.expandable ? chevron("right", 8, 13, "#8a8a8a", 1.5) : ""}</span>
        <span class="glyph">${p.icon}</span>
        <span class="label">${p.label}</span>
        ${p.pinned ? pin : ""}
      </button>`;
  }

  private file(f: FileEntry) {
    return html`
      <button class="file">
        ${folder(f)}
        <span>${f.lines.map((line, i) => html`${i ? html`<br />` : ""}${line}`)}</span>
      </button>`;
  }

  private taskbar() {
    return html`
      <footer class="taskbar">
        <button class="weather">
          ${icon(36, 36, svg`
            <path d="M14 0q8 5 5 13q-2 6-9 7.500q-7 0-10-5q9 .5 12-5q2.500-5 2-10.500z" fill="url(#moon)" />
            <path d="M7.500 35.500a7.200 7.200 0 0 1-.8-14.300a9.500 9.500 0 0 1 16.500-5.200a8 8 0 0 1 5.800 19.500z" fill="url(#cloudy)" />
            <path d="M8 35a6.500 6.500 0 0 1 .5-12.500q5 .5 6.500 4q3-7 9-6a7.500 7.500 0 0 1 4 14.500z" fill="#cbdcfa" opacity=".75" />`)}
          <span><span class="stack">27°C</span><span class="stack muted">Mostly cloudy</span></span>
        </button>
        <div class="dock">
          <button class="app" aria-label="Start">${icon(36, 36, svg`
            <path d="M2 0h15v17h-17v-15q0-2 2-2zM19 0h15q2 0 2 2v15h-17zM0 19h17v17h-15q-2 0-2-2zM19 19h17v15q0 2-2 2h-15z" fill="url(#win)" />`)}</button>
          <label class="pill">
            ${icon(22, 24, svg`<circle cx="10" cy="10" r="8.500" stroke="#222" stroke-width="2.200" /><path d="M15.500 16.500l6 6" stroke="#222" stroke-width="2.600" />`)}
            <input type="search" aria-label="Search" placeholder="Search" />
          </label>
          ${apps.map((a) => html`
            <button class=${classMap({ app: true, running: !!a.running })} aria-label=${a.name}>${icon(36, 36, a.art)}</button>`)}
        </div>
        <div class="tray">
          <button class="roomy" aria-label="Hidden icons">${chevron("up", 16, 9, "#222", 1.8)}</button>
          <button class="roomy" aria-label="OneDrive">${icon(24, 17, svg`
            <path d="M5.500 16a4.700 4.700 0 0 1-.8-9.200a7.600 7.600 0 0 1 13.600-1.300a5.300 5.300 0 0 1 .7 10.500z" fill="#dcdcdc" />
            <path d="M4.700 6.800a7.600 7.600 0 0 1 13.600-1.300l-4 2.500l9 5q-1 3-4 3z" fill="#a6a6a6" />
            <path d="M5.500 16l8-8l9 6q-1 2-4 2z" fill="#dedede" />
            <path d="M5.500 16a4.700 4.700 0 0 1-.8-9.200a7.600 7.600 0 0 1 13.600-1.300a5.300 5.300 0 0 1 .7 10.500z" stroke="#1a1a1a" stroke-width="1.300" />`)}</button>
          <button class="lang"><span><span class="stack">ENG</span><span class="stack">IN</span></span></button>
          <button aria-label="Wi-Fi">${icon(24, 18, svg`
            <g stroke="#1a1a1a" stroke-width="1.500"><path d="M1 6.500a15.500 15.500 0 0 1 22 0M4.500 10a10.600 10.600 0 0 1 15 0M8 13.500a5.700 5.700 0 0 1 8 0" /></g>
            <circle cx="12" cy="15.800" r="2" fill="#1a1a1a" />`)}</button>
          <button aria-label="Volume">${icon(24, 20, svg`
            <path d="M1 7h4l5.500-5v16l-5.500-5h-4z" stroke="#1a1a1a" stroke-width="1.400" stroke-linejoin="round" />
            <path d="M13.500 6.500q2.500 3.500 0 7M16.500 4q4.500 6 0 12M19.500 1q7 9 0 18" stroke="#1a1a1a" stroke-width="1.400" />`)}</button>
          <button aria-label="Battery">${icon(24, 16, svg`
            <rect x="1" y="1" width="19.500" height="14" rx="3.500" stroke="#1a1a1a" stroke-width="1.500" />
            <rect x="3.500" y="3.500" width="14.500" height="9" rx="1" fill="#111" /><path d="M21.500 5.500q2.500 0 2.500 2.500t-2.500 2.500z" fill="#1a1a1a" />`)}</button>
          <button class="clock"><span><span class="stack">19:38</span><span class="stack">30-09-2023</span></span></button>
        </div>
      </footer>`;
  }

  render() {
    return html`
      ${gradients}
      <div class="desktop">
        <span class="shortcut one">G</span>
        <span class="shortcut two">K</span>
        <span class="shortcut three">G</span>
        <div class="bloom"></div>
        <div class="halo">
          <main class="window">
            ${this.titlebar()} ${this.toolbar()} ${this.navbar()}
            <div class="body">
              <aside class="side">${places.map((p) => this.place(p))}</aside>
              <section class="files" aria-label="Files">${files.map((f) => this.file(f))}</section>
            </div>
            <div class="status">
              <span class="count">17 items</span>
              <span class="tick"></span>
              <button aria-label="Details view">${icon(18, 18, svg`<path d="M0 1.500h18M0 6.500h18M0 11.500h18M0 16.500h18" stroke="#111" />`)}</button>
              <button aria-label="Large icons view">${icon(18, 19, svg`<path d="M.5 1.500h17v13.500h-17zM0 17.500h18" stroke="#111" />`)}</button>
            </div>
          </main>
        </div>
      </div>
      ${this.taskbar()}
      <svg class="ink" width="2239" height="720" viewBox="0 0 2239 720" fill="none" stroke="#ffab00" stroke-width="6"
        stroke-linecap="round" stroke-linejoin="round" aria-hidden="true">
        <path d=${ink(loop)} /><path d=${ink(shaft)} /><path d=${ink(head)} />
      </svg>`;
  }
}
